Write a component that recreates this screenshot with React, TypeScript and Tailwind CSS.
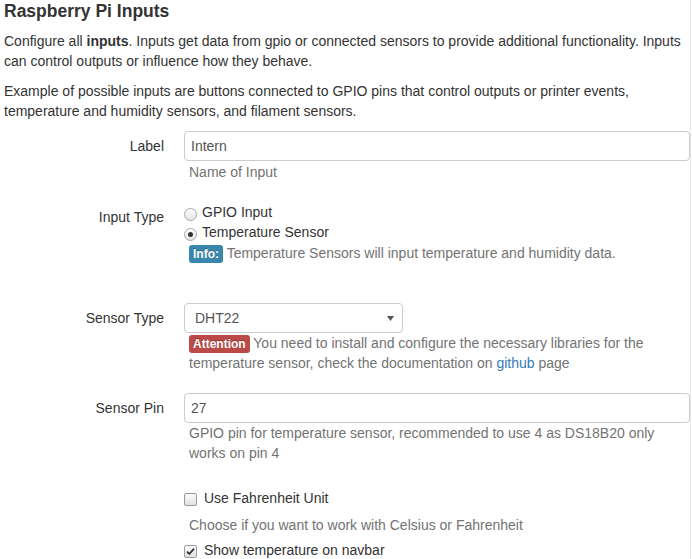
import React from "react";

function Radio({ checked }: { checked?: boolean }) {
  return (
    <span className="mt-[6px] flex h-[13px] w-[13px] shrink-0 items-center justify-center rounded-full border border-[#a8a8a8] bg-[linear-gradient(#ffffff,#e4e4e4)]">
      {checked && <span className="h-[5px] w-[5px] rounded-full bg-[#333]" />}
    </span>
  );
}

function Checkbox({ checked }: { checked?: boolean }) {
  return (
    <span className="mt-[5px] flex h-[13px] w-[13px] shrink-0 items-center justify-center rounded-[2px] border border-[#9a9a9a] bg-[linear-gradient(#fbfbfb,#e2e2e2)]">
      {checked && (
        <svg width="9" height="9" viewBox="0 0 9 9">
          <path d="M1 4.6 L3.4 7 L8 1.6" fill="none" stroke="#333" strokeWidth="1.8" />
        </svg>
      )}
    </span>
  );
}

function Badge({ kind, children }: { kind: "info" | "important"; children: React.ReactNode }) {
  return (
    <span
      className={
        "inline-block rounded-[3px] px-[4px] py-[2px] align-baseline text-[12px] font-bold leading-[14px] text-white [text-shadow:0_-1px_0_rgba(0,0,0,0.25)] " +
        (kind === "info" ? "bg-[#3a87ad]" : "bg-[#b94a48]")
      }
    >
      {children}
    </span>
  );
}

function Row({ label, children, className }: { label: string; children: React.ReactNode; className?: string }) {
  return (
    <div className={"flex " + (className ?? "mb-[20px]")}>
      <label className="w-[160px] shrink-0 pt-[5px] text-right">{label}</label>
      <div className="ml-[20px] flex-1">{children}</div>
    </div>
  );
}

export default function App() {
  return (
    <div className="h-[559px] w-[692px] overflow-hidden bg-white text-[14px] leading-[20px] text-[#333] [font-family:'Liberation_Sans',Arial,sans-serif]">
      <div className="min-h-full w-[691px] border-r border-[#e8e8e8] pl-[4px]">
        <h4 className="pt-[1px] text-[17.5px] font-bold leading-[20px]">Raspberry Pi Inputs</h4>
        <p className="mt-[10px] mb-[10px]">
          Configure all <b>inputs</b>. Inputs get data from gpio or connected sensors to provide additional functionality. Inputs can control outputs or influence how they behave.
        </p>
        <p className="mb-[10px]">
          Example of possible inputs are buttons connected to GPIO pins that control outputs or printer events, temperature and humidity sensors, and filament sensors.
        </p>

        <Row label="Label">
          <input
            readOnly
            value="Intern"
            className="block h-[30px] w-full rounded-[4px] border border-[#cccccc] px-[6px] text-[14px] text-[#555] outline-none"
          />
          <div className="mt-[1px] pl-[5px] text-[#737373]">Name of Input</div>
        </Row>

        <Row label="Input Type" className="mb-[40px]">
          <div className="flex h-[20px] items-start gap-[5px]">
            <Radio />
            <span>GPIO Input</span>
          </div>
          <div className="flex h-[20px] items-start gap-[5px]">
            <Radio checked />
            <span>Temperature Sensor</span>
          </div>
          <div className="mt-[1px] pl-[5px] text-[#737373]">
            <Badge kind="info">Info:</Badge> Temperature Sensors will input temperature and humidity data.
          </div>
        </Row>

        <Row label="Sensor Type">
          <div className="flex h-[30px] w-[219px] items-center justify-between rounded-[4px] border border-[#cccccc] pl-[10px] pr-[8px] text-[#555]">
            <span>DHT22</span>
            <svg width="7" height="5" viewBox="0 0 7 5">
              <path d="M0 0 H7 L3.5 5 Z" fill="#555" />
            </svg>
          </div>
          <div className="pl-[5px] text-[#737373]">
            <Badge kind="important">Attention</Badge> You need to install and configure the necessary libraries for the temperature sensor, check the documentation on{" "}
            <a className="text-[#337ab7]">github</a> page
          </div>
        </Row>

        <Row label="Sensor Pin" className="mb-[25px]">
          <input
            readOnly
            value="27"
            className="block h-[30px] w-full rounded-[4px] border border-[#cccccc] px-[6px] text-[14px] text-[#555] outline-none"
          />
          <div className="pl-[5px] text-[#737373]">
            GPIO pin for temperature sensor, recommended to use 4 as DS18B20 only works on pin 4
          </div>
        </Row>

        <div className="ml-[180px]">
          <div className="flex h-[20px] items-start gap-[7px]">
            <Checkbox />
            <span>Use Fahrenheit Unit</span>
          </div>
          <div className="mt-[7px] pl-[5px] text-[#737373]">Choose if you want to work with Celsius or Fahrenheit</div>
          <div className="mt-[5px] flex h-[20px] items-start gap-[7px]">
            <Checkbox checked />
            <span>Show temperature on navbar</span>
          </div>
        </div>
      </div>
    </div>
  );
}
